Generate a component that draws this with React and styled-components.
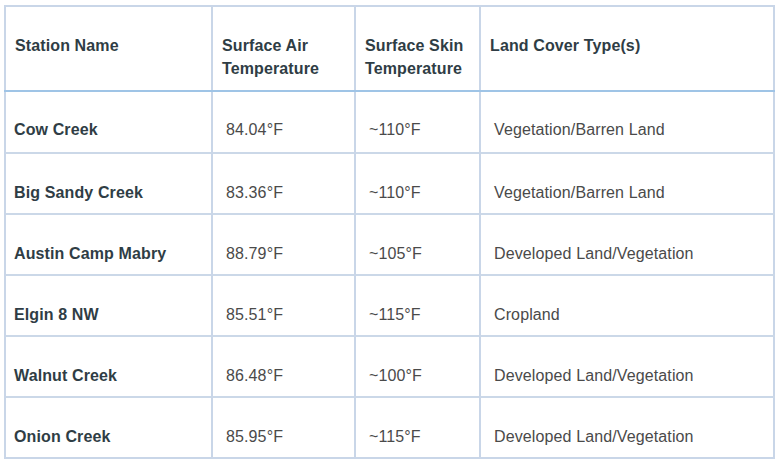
import React from 'react';
import styled, { createGlobalStyle } from 'styled-components';

const stations = [
    { name: 'Cow Creek', air: '84.04°F', skin: '~110°F', cover: 'Vegetation/Barren Land' },
    { name: 'Big Sandy Creek', air: '83.36°F', skin: '~110°F', cover: 'Vegetation/Barren Land' },
    { name: 'Austin Camp Mabry', air: '88.79°F', skin: '~105°F', cover: 'Developed Land/Vegetation' },
    { name: 'Elgin 8 NW', air: '85.51°F', skin: '~115°F', cover: 'Cropland' },
    { name: 'Walnut Creek', air: '86.48°F', skin: '~100°F', cover: 'Developed Land/Vegetation' },
    { name: 'Onion Creek', air: '85.95°F', skin: '~115°F', cover: 'Developed Land/Vegetation' },
];

const App = () => {
    return (
        <Page>
            <GlobalStyle />
            <Table>
                <colgroup>
                    <col style={{ width: 207 }} />
                    <col style={{ width: 143 }} />
                    <col style={{ width: 125 }} />
                    <col style={{ width: 294 }} />
                </colgroup>
                <thead>
                    <tr>
                        <HeadCell>Station Name</HeadCell>
                        <HeadCell>Surface Air<br />Temperature</HeadCell>
                        <HeadCell>Surface Skin<br />Temperature</HeadCell>
                        <HeadCell>Land Cover Type(s)</HeadCell>
                    </tr>
                </thead>
                <tbody>
                    {stations.map((s, i) => (
                        <Row key={s.name} $first={i === 0}>
                            <Cell $bold>{s.name}</Cell>
                            <Cell $indent>{s.air}</Cell>
                            <Cell $indent>{s.skin}</Cell>
                            <Cell $indent>{s.cover}</Cell>
                        </Row>
                    ))}
                </tbody>
            </Table>
        </Page>
    );
}

export default App;

const GlobalStyle = createGlobalStyle`
    body {
        margin: 0;
        background: #ffffff;
        font-family: "Liberation Sans", Arial, sans-serif;
    }
`;

const Page = styled.div`
    padding: 5px 0 0 4px;
`;

const Table = styled.table`
    width: 769px;
    table-layout: fixed;
    border-collapse: collapse;
    border: 2px solid #c9d6e8;
    font-size: 16px;
    line-height: 23px;
    letter-spacing: 0.12px;
`;

const HeadCell = styled.th`
    text-align: left;
    vertical-align: top;
    font-weight: bold;
    color: #2f3d45;
    padding: 27px 10px 10px 9px;
    border-left: 2px solid #c9d6e8;
    border-bottom: 2px solid #9fc4e6;
`;

const Row = styled.tr`
    border-top: 2px solid #cbd8e8;

    td {
        padding-top: ${(p) => (p.$first ? '26px' : '27px')};
        padding-bottom: ${(p) => (p.$first ? '11px' : '9px')};
    }
`;

const Cell = styled.td`
    vertical-align: top;
    padding-left: ${(p) => (p.$indent ? '13px' : '8px')};
    padding-right: 10px;
    border-left: 2px solid #c9d6e8;
    color: ${(p) => (p.$bold ? '#2f3d45' : '#4a4a4a')};
    font-weight: ${(p) => (p.$bold ? 'bold' : 'normal')};
    white-space: nowrap;
`;
